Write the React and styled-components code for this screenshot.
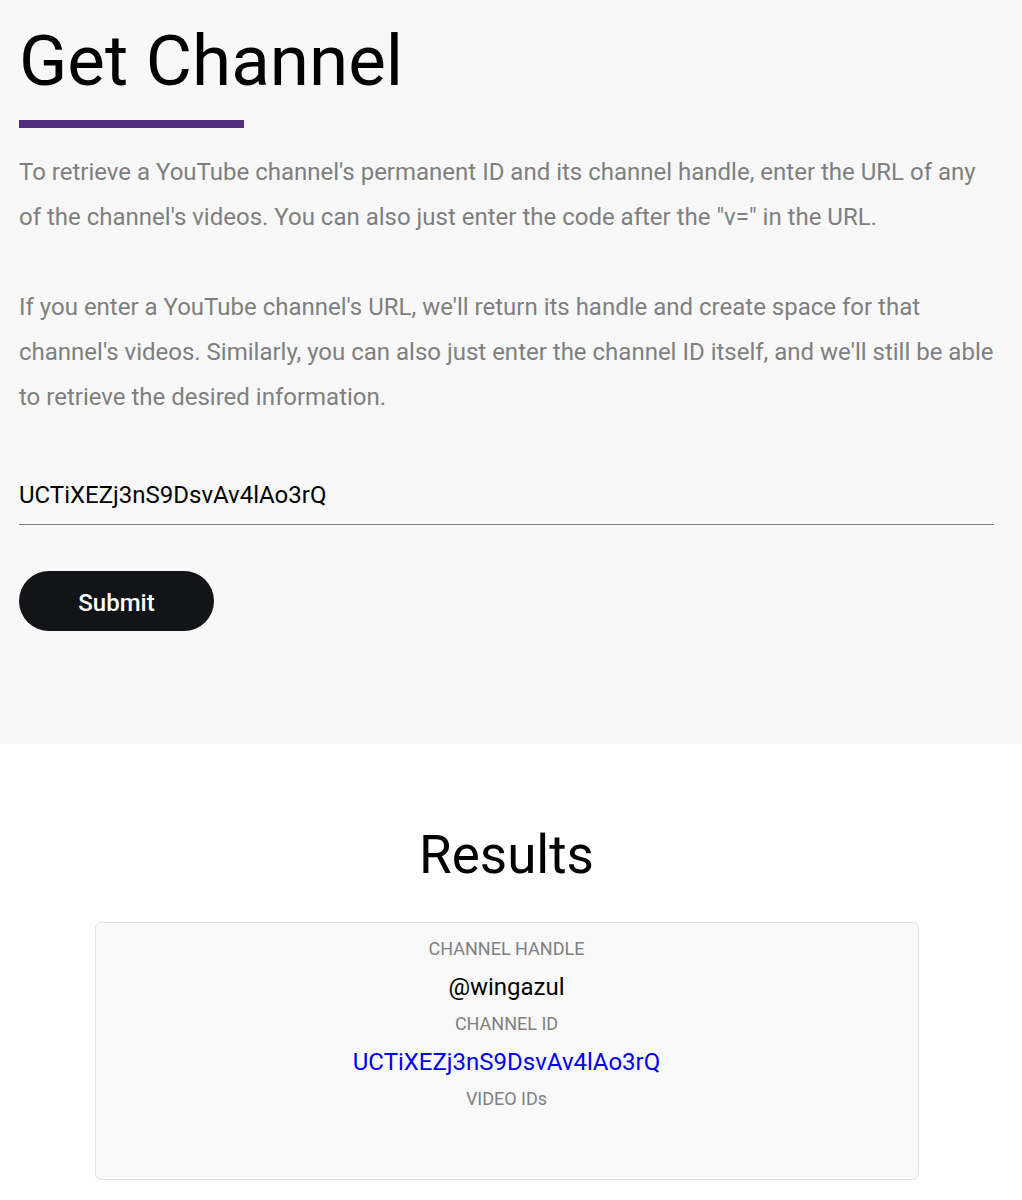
import React from "react";
import styled, { createGlobalStyle } from "styled-components";

const GlobalStyle = createGlobalStyle`
  html, body {
    margin: 0;
    padding: 0;
    background: #ffffff;
    font-family: Roboto, "Noto Sans", "Liberation Sans", sans-serif;
  }
  * { box-sizing: border-box; }
`;

const FormSection = styled.section`
  background: #f8f8f8;
  padding: 18px 28px 113px 19px;
`;

const Title = styled.h1`
  margin: 0;
  font-size: 71px;
  line-height: 86px;
  font-weight: 400;
  color: #000;
`;

const Accent = styled.div`
  margin-top: 16px;
  width: 225px;
  height: 8px;
  background: #532e7b;
`;

const Intro = styled.p`
  margin: 22px 0 0;
  font-size: 24px;
  line-height: 45px;
  color: #7f7f7f;
`;

const Field = styled.input`
  display: block;
  width: 100%;
  margin-top: 46px;
  padding: 15px 0;
  border: none;
  border-bottom: 1px solid #808080;
  background: transparent;
  font-family: inherit;
  font-size: 24px;
  color: #000;
  outline: none;
`;

const SubmitButton = styled.button`
  display: block;
  margin-top: 46px;
  width: 195px;
  height: 60px;
  padding: 4px 0 0;
  border: none;
  border-radius: 30px;
  background: #121418;
  color: #fff;
  font-family: inherit;
  font-size: 24px;
  font-weight: 500;
  cursor: pointer;
`;

const ResultsSection = styled.section`
  padding: 79px 28px 40px 19px;
`;

const ResultsTitle = styled.h2`
  margin: 0;
  text-align: center;
  font-size: 53px;
  line-height: 64px;
  font-weight: 400;
  color: #000;
`;

const Card = styled.div`
  width: 824px;
  margin: 35px auto 0;
  padding: 14px 16px 68px;
  background: #f9f9f9;
  border: 1px solid #e3e3e3;
  border-radius: 6px;
  display: flex;
  flex-direction: column;
  align-items: center;
  gap: 11.5px;
`;

const Label = styled.div`
  font-size: 18px;
  line-height: 24px;
  color: #808080;
  text-transform: ${(p) => (p.$raw ? "none" : "uppercase")};
`;

const Value = styled.div`
  font-size: 24px;
  line-height: 28px;
  color: #000;
`;

const ValueLink = styled.a`
  font-size: 24px;
  line-height: 28px;
  color: #0000ee;
  text-decoration: none;
`;

export default function App() {
  const id = "UCTiXEZj3nS9DsvAv4lAo3rQ";
  return (
    <>
      <GlobalStyle />
      <FormSection>
        <Title>Get Channel</Title>
        <Accent />
        <Intro>
          To retrieve a YouTube channel's permanent ID and its channel handle, enter the URL of any
          of the channel's videos. You can also just enter the code after the "v=" in the URL.
          <br />
          <br />
          If you enter a YouTube channel's URL, we'll return its handle and create space for that
          channel's videos. Similarly, you can also just enter the channel ID itself, and we'll
          still be able to retrieve the desired information.
        </Intro>
        <Field defaultValue={id} />
        <SubmitButton>Submit</SubmitButton>
      </FormSection>
      <ResultsSection>
        <ResultsTitle>Results</ResultsTitle>
        <Card>
          <Label>Channel Handle</Label>
          <Value>@wingazul</Value>
          <Label>Channel ID</Label>
          <ValueLink href="#">{id}</ValueLink>
          <Label $raw>VIDEO IDs</Label>
        </Card>
      </ResultsSection>
    </>
  );
}
